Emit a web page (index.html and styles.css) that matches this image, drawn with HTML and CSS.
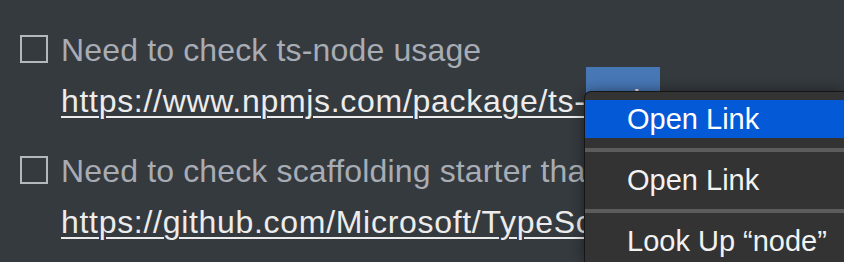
FILE: index.html
```html
<!DOCTYPE html>
<html lang="en">
<head>
<meta charset="utf-8">
<title>Todo notes</title>
<link rel="stylesheet" href="styles.css">
</head>
<body>
  <ul class="todos">
    <li class="todo">
      <span class="check"></span>
      <span class="label">Need to check ts-node usage</span>
      <a class="link first" href="#">https://www.npmjs.com/package/ts-<span class="sel">node</span></a>
    </li>
    <li class="todo">
      <span class="check"></span>
      <span class="label clip">Need to check scaffolding starter that works</span>
      <a class="link clip" href="#">https://github.com/Microsoft/TypeScript-Node-Starter</a>
    </li>
  </ul>

  <div class="menu">
    <div class="menu-item active">Open Link</div>
    <div class="menu-sep"></div>
    <div class="menu-item">Open Link</div>
    <div class="menu-sep"></div>
    <div class="menu-item">Look Up “node”</div>
  </div>
</body>
</html>
```

FILE: styles.css
```css
html, body {
  margin: 0;
  width: 100%;
  height: 100%;
  overflow: hidden;
}

body {
  background: #353a3f;
  font-family: "Liberation Sans", Arial, Helvetica, sans-serif;
  position: relative;
}

.todos {
  list-style: none;
  margin: 0;
  padding: 25px 0 0 20px;
  display: flex;
  flex-direction: column;
  gap: 19px;
}

.todo {
  display: grid;
  grid-template-columns: 28px auto;
  column-gap: 13px;
  font-size: 32px;
  line-height: 51px;
  white-space: nowrap;
}

.check {
  box-sizing: border-box;
  width: 28px;
  height: 28px;
  margin-top: 10px;
  border: 2px solid #b3b7be;
}

.label {
  color: #a8acb4;
  letter-spacing: 0.15px;
}

.link {
  grid-column: 2;
  color: #ececec;
  text-decoration: underline;
  text-decoration-thickness: 2px;
  text-underline-offset: 4px;
  letter-spacing: 0.7px;
}

.clip {
  display: block;
  width: 523px;
  overflow: hidden;
}

.sel {
  background: #4877b6;
  padding: 16px 0 6px;
}

.menu {
  position: absolute;
  left: 584px;
  top: 91px;
  right: 0;
  bottom: 0;
  padding-top: 8px;
  background: #333333;
  border-top: 1px solid #161616;
  border-left: 1px solid #161616;
  border-radius: 7px 0 0 0;
  box-shadow: 0 0 14px rgba(0, 0, 0, 0.45);
  font-size: 29px;
  color: #f2f2f2;
  overflow: hidden;
}

.menu-item {
  height: 38px;
  line-height: 38px;
  padding-left: 42px;
  white-space: nowrap;
}

.menu-item.active {
  background: #0459d6;
  color: #ffffff;
}

.menu-sep {
  height: 4px;
  margin: 10px 0 9px;
  background: #5c5c5c;
}
```
